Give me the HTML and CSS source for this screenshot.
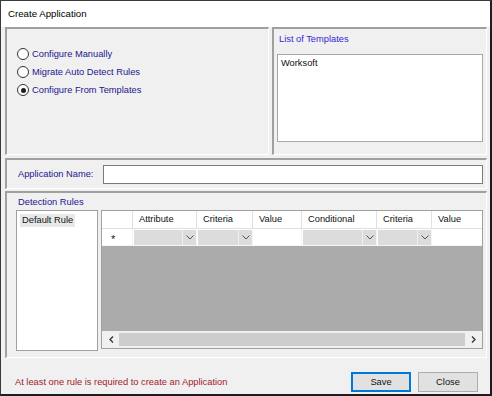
FILE: index.html
```html
<!DOCTYPE html>
<html>
<head>
<meta charset="utf-8">
<link rel="stylesheet" href="styles.css">
</head>
<body>
<div class="window">
  <div class="titlebar">Create Application</div>
  <div class="content">
    <div class="top">
      <div class="panel panel-left">
        <div class="radio-row"><span class="radio"></span><span class="blue">Configure Manually</span></div>
        <div class="radio-row"><span class="radio"></span><span class="blue">Migrate Auto Detect Rules</span></div>
        <div class="radio-row"><span class="radio checked"></span><span class="blue">Configure From Templates</span></div>
      </div>
      <div class="panel panel-right">
        <div class="list-title">List of Templates</div>
        <div class="listbox"><div class="list-item">Worksoft</div></div>
      </div>
    </div>
    <div class="panel name-row">
      <span class="blue name-label">Application Name:</span>
      <div class="textbox"></div>
    </div>
    <div class="panel rules">
      <div class="rules-title">Detection Rules</div>
      <div class="rules-body">
        <div class="rule-list"><span class="rule-item">Default Rule</span></div>
        <div class="grid">
          <div class="grid-head">
            <div class="c c0"></div>
            <div class="c c1">Attribute</div>
            <div class="c c2">Criteria</div>
            <div class="c c3">Value</div>
            <div class="c c4">Conditional</div>
            <div class="c c5">Criteria</div>
            <div class="c c6">Value</div>
          </div>
          <div class="grid-row">
            <div class="c c0 star">*</div>
            <div class="c c1 combo"><span class="arrow"><svg width="8" height="5" viewBox="0 0 8 5"><path d="M0.5 0.5 L4 4 L7.5 0.5" fill="none" stroke="#555" stroke-width="1"/></svg></span></div>
            <div class="c c2 combo"><span class="arrow"><svg width="8" height="5" viewBox="0 0 8 5"><path d="M0.5 0.5 L4 4 L7.5 0.5" fill="none" stroke="#555" stroke-width="1"/></svg></span></div>
            <div class="c c3 cell-white"></div>
            <div class="c c4 combo"><span class="arrow"><svg width="8" height="5" viewBox="0 0 8 5"><path d="M0.5 0.5 L4 4 L7.5 0.5" fill="none" stroke="#555" stroke-width="1"/></svg></span></div>
            <div class="c c5 combo"><span class="arrow"><svg width="8" height="5" viewBox="0 0 8 5"><path d="M0.5 0.5 L4 4 L7.5 0.5" fill="none" stroke="#555" stroke-width="1"/></svg></span></div>
            <div class="c c6 cell-white"></div>
          </div>
          <div class="grid-empty"></div>
          <div class="hscroll">
            <span class="sbtn"><svg width="5" height="7" viewBox="0 0 5 7"><path d="M4 0.5 L1 3.5 L4 6.5" fill="none" stroke="#333" stroke-width="1.3"/></svg></span>
            <span class="thumb"></span>
            <span class="sbtn"><svg width="5" height="7" viewBox="0 0 5 7"><path d="M1 0.5 L4 3.5 L1 6.5" fill="none" stroke="#333" stroke-width="1.3"/></svg></span>
          </div>
        </div>
      </div>
    </div>
  </div>
  <div class="footer">
    <span class="error">At least one rule is required to create an Application</span>
    <div class="buttons">
      <button class="btn btn-default">Save</button>
      <button class="btn">Close</button>
    </div>
  </div>
</div>
</body>
</html>
```
FILE: styles.css
```css
html, body {
  margin: 0;
  padding: 0;
}
body {
  font-family: "Liberation Sans", "DejaVu Sans", sans-serif;
  font-size: 9.3px;
  color: #111;
  background: #fff;
}
.window {
  width: 492px;
  height: 396px;
  box-sizing: border-box;
  border-top: 1px solid #3a3a3a;
  border-left: 1px solid #3a3a3a;
  border-right: 2px solid #1e1e1e;
  border-bottom: 2px solid #1e1e1e;
  background: #f0f0f0;
  display: flex;
  flex-direction: column;
}
.titlebar {
  height: 26px;
  line-height: 26px;
  background: #fff;
  padding-left: 7px;
  color: #000;
  font-size: 9.7px;
}
.content {
  padding: 0 3px 0 4px;
  display: flex;
  flex-direction: column;
}
.panel {
  box-sizing: border-box;
  border-top: 2px solid #a0a0a0;
  border-left: 2px solid #a0a0a0;
  border-right: 1px solid #fff;
  border-bottom: 1px solid #fff;
}
.top {
  display: flex;
  height: 128px;
  gap: 3px;
}
.panel-left {
  width: 264px;
  padding: 16px 0 0 10px;
}
.radio-row {
  display: flex;
  align-items: center;
  height: 18px;
  gap: 3px;
}
.radio {
  width: 10px;
  height: 10px;
  border: 1px solid #333;
  border-radius: 50%;
  background: #fff;
  box-sizing: content-box;
  position: relative;
}
.radio.checked::after {
  content: "";
  position: absolute;
  left: 2.5px;
  top: 2.5px;
  width: 5px;
  height: 5px;
  border-radius: 50%;
  background: #1e1e1e;
}
.blue {
  color: #22168f;
}
.panel-right {
  flex: 1;
  padding: 2px 3px 0 3px;
  display: flex;
  flex-direction: column;
}
.list-title {
  color: #3428d0;
  height: 23px;
  line-height: 16px;
  padding-left: 2px;
  box-sizing: border-box;
}
.listbox {
  height: 88px;
  box-sizing: border-box;
  background: #fff;
  border: 1px solid #a8a8a8;
  padding: 3px 0 0 3px;
  color: #111;
}
.name-row {
  margin-top: 3px;
  height: 31px;
  display: flex;
  align-items: center;
  padding: 0 3px 0 11px;
}
.name-label {
  width: 85px;
}
.textbox {
  flex: 1;
  height: 19px;
  box-sizing: border-box;
  background: #fff;
  border: 1px solid #7a7a7a;
}
.rules {
  margin-top: 2px;
  height: 167px;
  padding: 2px 3px 0 9px;
  display: flex;
  flex-direction: column;
}
.rules-title {
  color: #22168f;
  height: 15px;
  line-height: 14px;
  padding-left: 2px;
}
.rules-body {
  display: flex;
  gap: 3px;
}
.rule-list {
  width: 82px;
  height: 141px;
  box-sizing: border-box;
  background: #fff;
  border: 1px solid #a0a0a0;
  padding: 3px 0 0 3px;
}
.rule-item {
  background: #e8e8e8;
  padding: 0 2px;
  color: #111;
  display: inline-block;
  line-height: 13px;
}
.grid {
  width: 382px;
  height: 139px;
  box-sizing: border-box;
  border: 1px solid #a0a0a0;
  background: #ababab;
  display: flex;
  flex-direction: column;
  overflow: hidden;
}
.grid-head, .grid-row {
  display: flex;
  height: 18px;
  flex: none;
}
.grid-row {
  height: 17px;
}
.grid-head .c {
  background: #fff;
  border-right: 1px solid #e0e0e0;
  border-bottom: 1px solid #e0e0e0;
  line-height: 17px;
  padding-left: 6px;
  color: #111;
}
.c {
  box-sizing: border-box;
  flex: none;
}
.c0 { width: 31px; }
.c1 { width: 64px; }
.c2 { width: 56px; }
.c3 { width: 49px; }
.c4 { width: 75px; }
.c5 { width: 55px; }
.c6 { width: 60px; }
.grid-row .c {
  border-right: 1px solid #f4f4f4;
  border-bottom: 1px solid #f4f4f4;
}
.star {
  background: #fff;
  padding-left: 9px;
  line-height: 20px;
  font-size: 11px;
  color: #222;
}
.combo {
  background: #dcdcdc;
  display: flex;
  justify-content: flex-end;
  align-items: center;
  border: 1px solid #fff;
}
.arrow {
  width: 13px;
  height: 15px;
  display: flex;
  align-items: center;
  justify-content: center;
  border-left: 1px solid #f0f0f0;
}
.cell-white {
  background: #fff;
}
.grid-empty {
  flex: 1;
}
.hscroll {
  height: 17px;
  flex: none;
  background: #f0f0f0;
  display: flex;
  align-items: center;
  padding: 0 2px;
  gap: 1px;
}
.sbtn {
  width: 14px;
  height: 15px;
  display: flex;
  align-items: center;
  justify-content: center;
}
.thumb {
  flex: 1;
  height: 13px;
  background: #cdcdcd;
}
.footer {
  flex: 1;
  display: flex;
  align-items: center;
  justify-content: space-between;
  padding: 11px 12px 0 14px;
}
.error {
  color: #a31a2a;
}
.buttons {
  display: flex;
  gap: 7px;
}
.btn {
  width: 60px;
  height: 20px;
  box-sizing: border-box;
  background: #e1e1e1;
  border: 1px solid #adadad;
  font-family: "Liberation Sans", "DejaVu Sans", sans-serif;
  font-size: 9.3px;
  color: #111;
  padding: 0;
}
.btn-default {
  border: 2px solid #0078d7;
}
```
